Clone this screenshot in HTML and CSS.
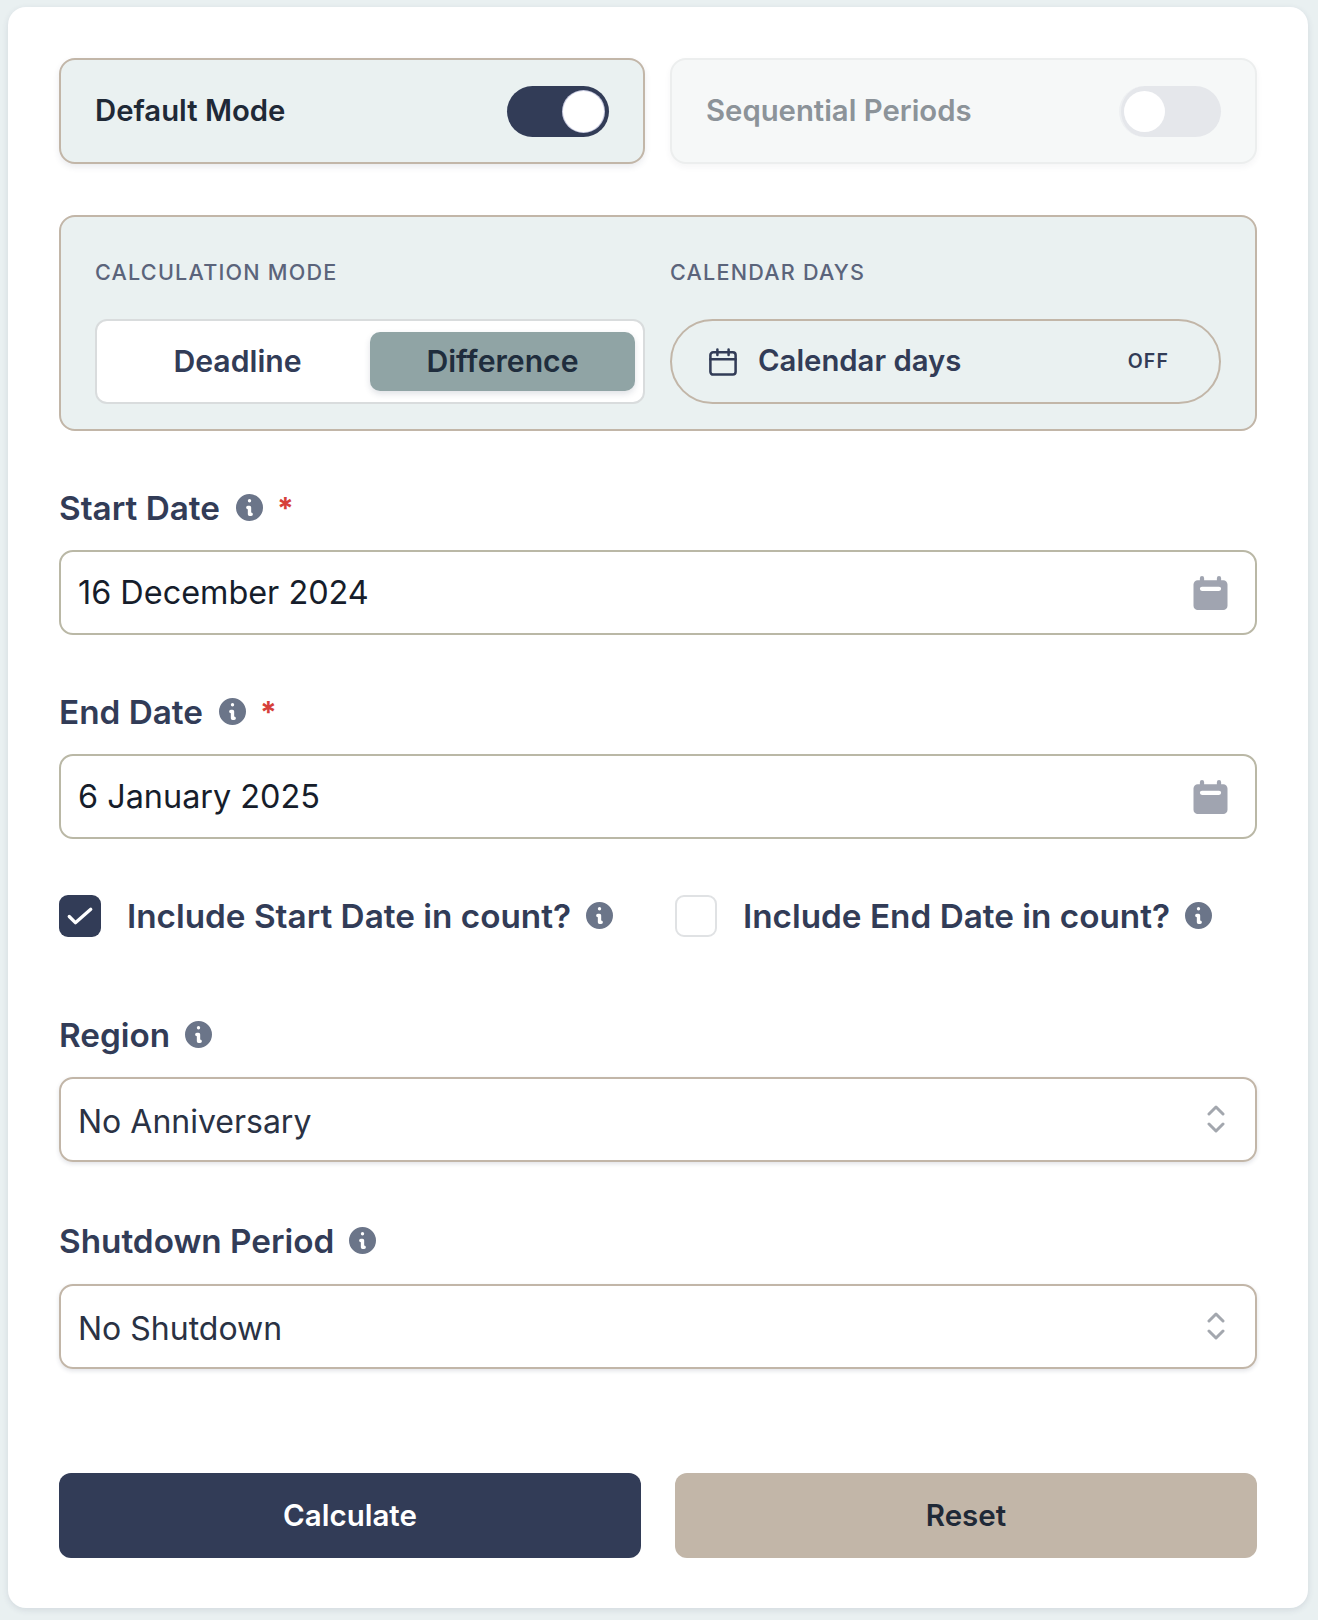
FILE: index.html
```html
<!DOCTYPE html>
<html lang="en">
<head>
    <meta charset="UTF-8">
    <title>Date Calculator</title>
    <link rel="stylesheet" href="styles.css">
</head>
<body>

    <div class="card">
        <div class="mode-row">
            <div class="mode-box">
                <span class="mode-title">Default Mode</span>
                <span class="switch switch-on"><span class="knob"></span></span>
            </div>
            <div class="mode-box mode-box-off">
                <span class="mode-title">Sequential Periods</span>
                <span class="switch switch-off"><span class="knob"></span></span>
            </div>
        </div>

        <div class="panel">
            <div>
                <div class="panel-label">CALCULATION MODE</div>
                <div class="segment">
                    <span class="segment-item">Deadline</span>
                    <span class="segment-item segment-active">Difference</span>
                </div>
            </div>
            <div>
                <div class="panel-label">CALENDAR DAYS</div>
                <div class="pill">
                    <svg class="pill-icon" viewBox="2 2 20 20" fill="none" stroke="currentColor" stroke-width="1.8" stroke-linecap="round">
                        <rect x="3" y="5" width="18" height="16" rx="2"/>
                        <path d="M3 10h18M8 3v4M16 3v4"/>
                    </svg>
                    <span class="pill-text">Calendar days</span>
                    <span class="pill-state">OFF</span>
                </div>
            </div>
        </div>

        <div class="group">
            <div class="label label-date">
                <span>Start Date</span>
                <svg class="info" viewBox="2 2 16 16"><path fill-rule="evenodd" d="M18 10a8 8 0 11-16 0 8 8 0 0116 0zm-7-4a1 1 0 11-2 0 1 1 0 012 0zM9 9a1 1 0 000 2v3a1 1 0 001 1h1a1 1 0 100-2v-3a1 1 0 00-1-1H9z"/></svg>
                <span class="required">*</span>
            </div>
            <div class="field">
                <span>16 December 2024</span>
                <svg class="date-icon" viewBox="2 2 16 16"><path fill-rule="evenodd" d="M6 2a1 1 0 00-1 1v1H4a2 2 0 00-2 2v10a2 2 0 002 2h12a2 2 0 002-2V6a2 2 0 00-2-2h-1V3a1 1 0 10-2 0v1H7V3a1 1 0 00-1-1zm0 5a1 1 0 000 2h8a1 1 0 100-2H6z"/></svg>
            </div>
        </div>

        <div class="group">
            <div class="label label-date">
                <span>End Date</span>
                <svg class="info" viewBox="2 2 16 16"><path fill-rule="evenodd" d="M18 10a8 8 0 11-16 0 8 8 0 0116 0zm-7-4a1 1 0 11-2 0 1 1 0 012 0zM9 9a1 1 0 000 2v3a1 1 0 001 1h1a1 1 0 100-2v-3a1 1 0 00-1-1H9z"/></svg>
                <span class="required">*</span>
            </div>
            <div class="field">
                <span>6 January 2025</span>
                <svg class="date-icon" viewBox="2 2 16 16"><path fill-rule="evenodd" d="M6 2a1 1 0 00-1 1v1H4a2 2 0 00-2 2v10a2 2 0 002 2h12a2 2 0 002-2V6a2 2 0 00-2-2h-1V3a1 1 0 10-2 0v1H7V3a1 1 0 00-1-1zm0 5a1 1 0 000 2h8a1 1 0 100-2H6z"/></svg>
            </div>
        </div>

        <div class="check-row">
            <div class="check-item">
                <span class="checkbox checkbox-on">
                    <svg viewBox="0 0 41 41" fill="none" stroke="#fff" stroke-width="3.2" stroke-linecap="round" stroke-linejoin="round"><path d="M10 21l6 6 15-13"/></svg>
                </span>
                <span class="check-text">Include Start Date in count?</span>
                <svg class="info" viewBox="2 2 16 16"><path fill-rule="evenodd" d="M18 10a8 8 0 11-16 0 8 8 0 0116 0zm-7-4a1 1 0 11-2 0 1 1 0 012 0zM9 9a1 1 0 000 2v3a1 1 0 001 1h1a1 1 0 100-2v-3a1 1 0 00-1-1H9z"/></svg>
            </div>
            <div class="check-item">
                <span class="checkbox"></span>
                <span class="check-text">Include End Date in count?</span>
                <svg class="info" viewBox="2 2 16 16"><path fill-rule="evenodd" d="M18 10a8 8 0 11-16 0 8 8 0 0116 0zm-7-4a1 1 0 11-2 0 1 1 0 012 0zM9 9a1 1 0 000 2v3a1 1 0 001 1h1a1 1 0 100-2v-3a1 1 0 00-1-1H9z"/></svg>
            </div>
        </div>

        <div class="group group-region">
            <div class="label">
                <span>Region</span>
                <svg class="info" viewBox="2 2 16 16"><path fill-rule="evenodd" d="M18 10a8 8 0 11-16 0 8 8 0 0116 0zm-7-4a1 1 0 11-2 0 1 1 0 012 0zM9 9a1 1 0 000 2v3a1 1 0 001 1h1a1 1 0 100-2v-3a1 1 0 00-1-1H9z"/></svg>
            </div>
            <div class="field field-select">
                <span>No Anniversary</span>
                <svg class="stepper" viewBox="0 0 18 30" fill="none" stroke="currentColor" stroke-width="3" stroke-linecap="round" stroke-linejoin="round"><path d="M2 10l7-7 7 7M2 20l7 7 7-7"/></svg>
            </div>
        </div>

        <div class="group group-shutdown">
            <div class="label">
                <span>Shutdown Period</span>
                <svg class="info" viewBox="2 2 16 16"><path fill-rule="evenodd" d="M18 10a8 8 0 11-16 0 8 8 0 0116 0zm-7-4a1 1 0 11-2 0 1 1 0 012 0zM9 9a1 1 0 000 2v3a1 1 0 001 1h1a1 1 0 100-2v-3a1 1 0 00-1-1H9z"/></svg>
            </div>
            <div class="field field-select">
                <span>No Shutdown</span>
                <svg class="stepper" viewBox="0 0 18 30" fill="none" stroke="currentColor" stroke-width="3" stroke-linecap="round" stroke-linejoin="round"><path d="M2 10l7-7 7 7M2 20l7 7 7-7"/></svg>
            </div>
        </div>

        <div class="actions">
            <button class="button button-primary">Calculate</button>
            <button class="button button-reset">Reset</button>
        </div>
    </div>

</body>
</html>
```

FILE: styles.css
```css
body {
    margin: 0;
    padding: 7px 10px 11px 8px;
    background: #e9f0f1;
    font-family: Inter, "Noto Sans", sans-serif;
    color: #323c57;
}

.card {
    padding: 51px 51px 50px;
    background: #fff;
    border-radius: 18px;
    box-shadow: 0 2px 6px rgba(50, 60, 87, 0.12);
}

.mode-row {
    display: grid;
    grid-template-columns: 586px 587px;
    gap: 25px;
}

.mode-box {
    display: flex;
    align-items: center;
    justify-content: space-between;
    box-sizing: border-box;
    height: 106px;
    padding: 0 34px;
    background: #eaf1f1;
    border: 2px solid #c2b6a8;
    border-radius: 16px;
    box-shadow: 0 3px 6px rgba(50, 60, 87, 0.1);
}

.mode-title {
    margin-top: -2px;
    font-size: 29.3px;
    font-weight: 600;
    color: #1f2937;
}

.mode-box-off {
    background: #f6f8f8;
    border-color: #eceeee;
    box-shadow: 0 3px 6px rgba(50, 60, 87, 0.05);
}

.mode-box-off .mode-title {
    color: #8c9399;
}

.switch {
    display: flex;
    align-items: center;
    box-sizing: border-box;
    width: 102px;
    height: 51px;
    padding: 0 4px;
    border-radius: 26px;
}

.switch-on {
    justify-content: flex-end;
    padding-right: 5px;
    background: #323c57;
}

.switch-off {
    background: #e5e7eb;
    border-left: 2px solid #eef0f2;
    padding-left: 3px;
}

.knob {
    width: 41px;
    height: 41px;
    background: #fff;
    border-radius: 50%;
}

.switch-on .knob {
    box-shadow: 0 0 0 1px #c9cbe0;
}

.panel {
    display: grid;
    grid-template-columns: 550px 551px;
    gap: 25px;
    box-sizing: border-box;
    height: 216px;
    margin-top: 51px;
    padding: 43px 34px 0;
    background: #eaf1f1;
    border: 2px solid #c2b6a8;
    border-radius: 16px;
}

.panel-label {
    margin-bottom: 35px;
    font-size: 21.6px;
    line-height: 24px;
    font-weight: 500;
    letter-spacing: 1.2px;
    color: #5b647b;
}

.segment {
    display: grid;
    grid-template-columns: 1fr 1fr;
    box-sizing: border-box;
    height: 85px;
    padding: 11px 8px 11px;
    background: #fff;
    border: 2px solid #d9dcdd;
    border-radius: 12px;
}

.segment-item {
    display: flex;
    align-items: center;
    justify-content: center;
    padding-bottom: 2px;
    font-size: 30.2px;
    font-weight: 600;
}

.segment-active {
    background: #90a4a5;
    border-radius: 10px;
    color: #1f2d3d;
    box-shadow: 0 3px 6px rgba(50, 60, 87, 0.15);
}

.pill {
    display: flex;
    align-items: center;
    box-sizing: border-box;
    height: 85px;
    padding: 0 50px 0 37px;
    border: 2px solid #c2b6a8;
    border-radius: 43px;
}

.pill-icon {
    width: 28px;
    height: 28px;
    margin-right: 21px;
}

.pill-text {
    flex: 1;
    margin-top: -2px;
    font-size: 29.3px;
    font-weight: 600;
}

.pill-state {
    margin-top: -2px;
    font-size: 19.5px;
    font-weight: 600;
    letter-spacing: 1.1px;
}

.group {
    margin-top: 63px;
}

.group-shutdown .label {
    margin-bottom: 29px;
}

.group-region {
    margin-top: 84px;
}

.group-shutdown {
    margin-top: 65px;
}

.label {
    display: flex;
    align-items: center;
    gap: 15px;
    height: 28px;
    margin-bottom: 28px;
    font-size: 33.3px;
    font-weight: 600;
}

.label-date {
    gap: 16px;
}

.required {
    margin-left: -2px;
    font-size: 30px;
    font-weight: 700;
    color: #d6403a;
}

.info {
    width: 27px;
    height: 27px;
    flex: none;
    margin-top: -2px;
    fill: #6b7589;
}

.field {
    display: flex;
    align-items: center;
    justify-content: space-between;
    box-sizing: border-box;
    height: 85px;
    padding: 0 27px 0 17px;
    border: 2px solid #bab8a6;
    border-radius: 14px;
    font-size: 32.4px;
    color: #161d2b;
}

.field-select {
    border-color: #c2b6a8;
    font-size: 32px;
    color: #2a3244;
    box-shadow: 0 2px 4px rgba(50, 60, 87, 0.14);
}

.field-select span {
    padding-top: 4px;
}

.date-icon {
    width: 35px;
    height: 34px;
    fill: #a0a4b0;
}

.stepper {
    width: 18px;
    height: 30px;
    margin-right: 3px;
    margin-bottom: 2px;
    color: #a3a7ae;
}

.check-row {
    display: grid;
    grid-template-columns: 616px 1fr;
    margin-top: 56px;
}

.check-item {
    display: flex;
    align-items: center;
    height: 42px;
}

.checkbox {
    box-sizing: border-box;
    width: 42px;
    height: 42px;
    flex: none;
    margin-right: 26px;
    border: 2px solid #e0e2e4;
    border-radius: 9px;
}

.checkbox-on {
    background: #323c57;
    border: none;
}

.checkbox svg {
    display: block;
}

.check-text {
    margin-right: 15px;
    font-size: 33.3px;
    font-weight: 600;
}

.actions {
    display: grid;
    grid-template-columns: 582px 582px;
    gap: 34px;
    margin-top: 104px;
}

.button {
    height: 85px;
    padding-bottom: 3px;
    border: none;
    border-radius: 12px;
    font-family: inherit;
    font-size: 29.5px;
    font-weight: 600;
}

.button-primary {
    background: #323c57;
    color: #fff;
}

.button-reset {
    background: #c2b6a8;
    color: #1f2937;
}
```
